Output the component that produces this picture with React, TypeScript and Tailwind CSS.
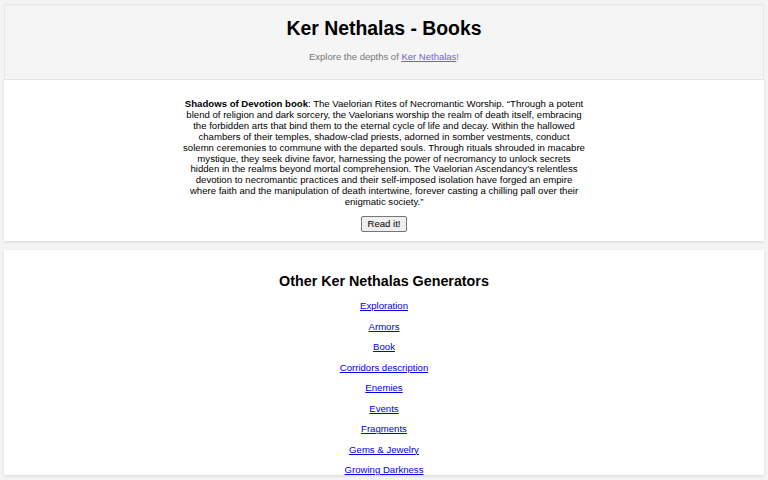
const generators = [
  'Exploration',
  'Armors',
  'Book',
  'Corridors description',
  'Enemies',
  'Events',
  'Fragments',
  'Gems & Jewelry',
  'Growing Darkness',
];

export default function App() {
  return (
    <div className="min-h-screen bg-[#f4f4f4] px-1 pt-1 font-['Liberation_Sans',Arial,sans-serif] text-black">
      <header className="border border-[#e8e8e8] bg-[#f5f5f5] pb-[16px] pt-[14px] text-center">
        <h1 className="text-[19.4px] font-bold leading-[18px]">Ker Nethalas - Books</h1>
        <p className="mt-[14px] text-[9.5px] leading-[12px] text-[#777]">
          Explore the depths of{' '}
          <a href="#" className="text-[#6f62d9] underline">
            Ker Nethalas
          </a>
          !
        </p>
      </header>

      <section className="bg-white px-4 pb-[7px] pt-[19px] text-center shadow-[0_1px_3px_rgba(0,0,0,0.12)]">
        <p className="mx-auto max-w-[402px] text-[9.6px] leading-[10.9px]">
          <b>Shadows of Devotion book</b>: The Vaelorian Rites of Necromantic Worship. “Through a potent blend of
          religion and dark sorcery, the Vaelorians worship the realm of death itself, embracing the forbidden arts
          that bind them to the eternal cycle of life and decay. Within the hallowed chambers of their temples,
          shadow-clad priests, adorned in somber vestments, conduct solemn ceremonies to commune with the departed
          souls. Through rituals shrouded in macabre mystique, they seek divine favor, harnessing the power of
          necromancy to unlock secrets hidden in the realms beyond mortal comprehension. The Vaelorian Ascendancy's
          relentless devotion to necromantic practices and their self-imposed isolation have forged an empire where
          faith and the manipulation of death intertwine, forever casting a chilling pall over their enigmatic
          society.”
        </p>
        <button className="mt-[8px] rounded-[2px] border border-[#767676] bg-[#efefef] px-[5px] py-px text-[9.6px] leading-[12px]">
          Read it!
        </button>
      </section>

      <section className="mt-[9px] h-[225px] overflow-hidden bg-white pt-[22px] text-center shadow-[0_1px_3px_rgba(0,0,0,0.12)]">
        <h2 className="text-[14.3px] font-bold leading-[18px]">Other Ker Nethalas Generators</h2>
        <ul className="mt-[10px] flex flex-col items-center gap-[8.5px] text-[9.6px] leading-[12px]">
          {generators.map((g) => (
            <li key={g}>
              <a href="#" className="text-[#0000ee] underline">
                {g}
              </a>
            </li>
          ))}
        </ul>
      </section>
    </div>
  );
}
